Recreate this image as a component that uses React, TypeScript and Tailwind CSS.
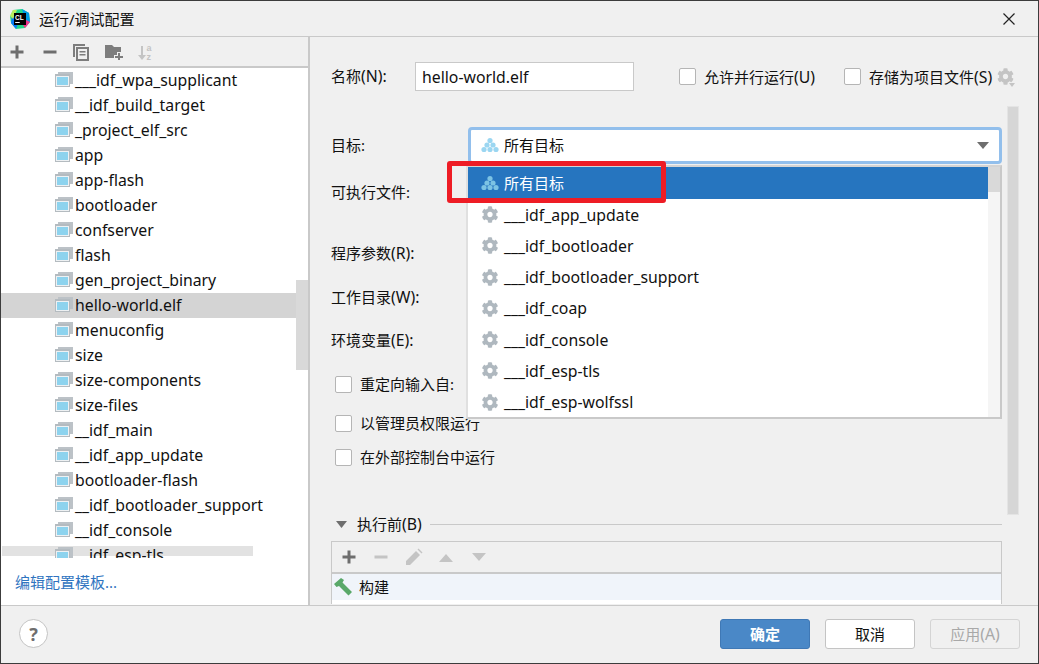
import React from "react";
import { FaCog } from "react-icons/fa";

const font = { fontFamily: '"Noto Sans", "Noto Sans CJK SC", sans-serif' };

function T({ s }: { s: string }) {
  return (
    <>
      {s.split(/([\x00-\x7f]+)/).map((p, i) =>
        /^[\x00-\x7f]+$/.test(p) ? (
          <span key={i} className="text-[15.8px]">{p}</span>
        ) : (
          <span key={i}>{p}</span>
        ),
      )}
    </>
  );
}

function ConfigIcon() {
  return (
    <svg width="18" height="17" viewBox="0 0 18 17" className="relative shrink-0">
      <path d="M3 3V1h15v12h-3V3z" fill="#bcc2c7" />
      <rect x="0.5" y="3.500" width="14" height="12" fill="#eef1f3" stroke="#b4bbc0" />
      <rect x="0" y="3" width="15" height="2" fill="#b4bbc0" />
      <rect x="2" y="6" width="11" height="8" fill="#8dd3ee" />
    </svg>
  );
}

function TargetIcon({ dim }: { dim?: boolean }) {
  const c = dim ? "#7cc3e4" : "#9bd6f1";
  return (
    <svg width="18" height="16" viewBox="0 0 18 16" className="shrink-0">
      {[[9, 3.5], [6, 8], [12, 8], [3, 12.5], [9, 12.5], [15, 12.5]].map(([x, y]) => (
        <circle key={`${x}-${y}`} cx={x} cy={y} r="2.6" fill={c} />
      ))}
    </svg>
  );
}

function Logo() {
  return (
    <svg width="20" height="20" viewBox="0 0 20 20">
      <path d="M3 1 12 0l7 4 1 9-5 6-9 1-5-6L0 7z" fill="#21d789" />
      <path d="M12 0l7 4 1 9-5-2z" fill="#009ae5" />
      <path d="M6 20l-5-6 1-6 7 4z" fill="#087cfa" />
      <path d="M15 19l5-6-4-2-3 5z" fill="#ed358c" />
      <path d="M3 1 0 7l3 3 4-9z" fill="#fcf84a" opacity="0.7" />
      <rect x="4" y="4" width="12" height="12" fill="#000" />
      <text x="5" y="10.5" fontSize="6.5" fontWeight="700" fill="#fff" fontFamily="Liberation Sans">CL</text>
      <rect x="5.200" y="13" width="4.500" height="1" fill="#fff" />
    </svg>
  );
}

function Plus() {
  return <path d="M6.500 0.500h3v5h5v3h-5v5h-3v-5h-5v-3h5z" fill="#6e6e6e" />;
}

function ToolIcons() {
  return (
    <div className="flex h-[31px] items-center border-b-2 border-[#c9c9c9]">
      <svg width="16" height="14" viewBox="0 0 16 14" className="ml-[8px]"><Plus /></svg>
      <svg width="16" height="14" viewBox="0 0 16 14" className="ml-[17px]"><rect x="1.500" y="5.500" width="13" height="3" fill="#6e6e6e" /></svg>
      <svg width="18" height="18" viewBox="0 0 18 18" className="ml-[14px]"><path d="M1 1h12v2H3v11H1z" fill="#7d7d7d" /><rect x="5" y="5" width="11" height="12" fill="#f0f0f0" stroke="#7d7d7d" strokeWidth="2" /><path d="M7.500 8h6v1.500h-6zM7.500 11h6v1.500h-6z" fill="#7d7d7d" /></svg>
      <svg width="18" height="16" viewBox="0 0 18 16" className="ml-[15px]"><path d="M0 1h7l2 2h7v5h-4v3H9v3H0z" fill="#7d7d7d" /><path d="M13 9h2v3h3v2h-3v2h-2v-2h-3v-2h3z" fill="#7d7d7d" /></svg>
      <svg width="18" height="18" viewBox="0 0 18 18" className="ml-[14px]"><path d="M4 3h2v9h3l-4 5-4-5h3z" fill="#c4c4c4" /><text x="9.500" y="8" fontSize="9" fontWeight="700" fill="#c4c4c4" fontFamily="Liberation Sans">a</text><text x="9.500" y="17" fontSize="9" fontWeight="700" fill="#c4c4c4" fontFamily="Liberation Sans">z</text></svg>
    </div>
  );
}

const tree = ["___idf_wpa_supplicant", "__idf_build_target", "_project_elf_src", "app", "app-flash", "bootloader", "confserver", "flash", "gen_project_binary", "hello-world.elf", "menuconfig", "size", "size-components", "size-files", "__idf_main", "__idf_app_update", "bootloader-flash", "__idf_bootloader_support", "__idf_console", "__idf_esp-tls"];

const targets = ["___idf_app_update", "___idf_bootloader", "___idf_bootloader_support", "___idf_coap", "___idf_console", "___idf_esp-tls", "___idf_esp-wolfssl"];

function Box() {
  return <span className="block h-[17px] w-[17px] shrink-0 rounded-[2px] border border-[#b5b5b5] bg-white" />;
}

function CheckRow({ label, h }: { label: string; h: string }) {
  return (
    <div className={`flex items-center gap-2 pl-1 ${h}`}>
      <Box />
      <span>{label}</span>
    </div>
  );
}

export default function App() {
  return (
    <div style={font} className="relative flex h-[664px] w-[1039px] flex-col overflow-hidden border border-[#3c3c3c] bg-[#f0f0f0] text-[15px] leading-[20px] text-[#111]">
      <div className="flex h-[36px] shrink-0 items-center border-b border-[#c9c9c9] pl-[9px] pr-[23px]">
        <Logo />
        <span className="ml-[9px]">运行/调试配置</span>
        <svg width="12" height="12" viewBox="0 0 12 12" className="ml-auto"><path d="M0.500 0.500l11 11M11.500 0.500l-11 11" stroke="#222" strokeWidth="1.200" fill="none" /></svg>
      </div>

      <div className="flex min-h-0 flex-1">
        <div className="flex w-[309px] shrink-0 flex-col border-r-2 border-[#c9c9c9] bg-white">
          <div className="bg-[#f0f0f0]"><ToolIcons /></div>
          <div className="relative h-[490px] shrink-0 overflow-hidden">
            {tree.map((t) => (
              <div key={t} className={`relative flex h-[25px] items-center gap-[2px] pb-[2px] pl-[54px] ${t === "hello-world.elf" ? "bg-[#d4d4d4]" : ""}`}>
                {t === "__idf_esp-tls" && <div className="absolute left-px top-[3px] h-[10px] w-[251px] bg-[#e2e2e2]" />}
                <ConfigIcon />
                <span className="relative whitespace-nowrap text-[15.8px]">{t}</span>
              </div>
            ))}
            <div className="absolute right-0 top-[212px] h-[90px] w-[12px] bg-[#d9d9d9]" />
          </div>
          <div className="flex flex-1 items-center pl-[14px] text-[#2f74c0]">编辑配置模板...</div>
        </div>

        <div className="relative min-w-0 flex-1">
          <div className="flex h-[53px] items-start pl-[21px] pt-[25px]">
            <span className="w-[84px] leading-[28px]"><T s="名称(N):" /></span>
            <div className="flex h-[29px] w-[219px] items-center border border-[#c9c9c9] bg-white pl-[6px] text-[15.8px]">hello-world.elf</div>
            <div className="ml-[45px] flex h-[29px] items-center gap-2"><Box /><span><T s="允许并行运行(U)" /></span></div>
            <div className="ml-[29px] flex h-[29px] items-center gap-2"><Box /><span><T s="存储为项目文件(S)" /></span></div>
            <div className="relative ml-[5px] mt-[6px]">
              <FaCog className="text-[17px] text-[#c4c4c4]" />
              <svg width="6" height="4" viewBox="0 0 6 4" className="absolute -right-[1px] top-[15px]"><path d="M0 0h6L3 4z" fill="#c4c4c4" /></svg>
            </div>
          </div>

          <div className="pl-[21px] pr-[36px] pt-[37px]">
            <div className="flex h-[36px] items-center">
              <span className="w-[137px] shrink-0">目标:</span>
              <div className="flex h-[37px] flex-1 items-center rounded-[4px] border-[3px] border-[#92bfec] bg-white pl-[10px] pr-[10px]">
                <TargetIcon />
                <span className="ml-[5px]">所有目标</span>
                <svg width="12" height="7" viewBox="0 0 12 7" className="ml-auto"><path d="M0 0h12L6 7z" fill="#6e6e6e" /></svg>
              </div>
            </div>
            <div className="flex h-[58px] items-center"><span>可执行文件:</span></div>
            <div className="flex h-[64px] items-center"><span><T s="程序参数(R):" /></span></div>
            <div className="flex h-[24px] items-center"><span><T s="工作目录(W):" /></span></div>
            <div className="flex h-[62px] items-center"><span><T s="环境变量(E):" /></span></div>
            <CheckRow label="重定向输入自:" h="h-[26px]" />
            <CheckRow label="以管理员权限运行" h="mt-[7px] h-[38px]" />
            <CheckRow label="在外部控制台中运行" h="h-[30px]" />

            <div className="mt-[40px] flex h-[24px] items-center">
              <svg width="12" height="7" viewBox="0 0 12 7" className="ml-[5px]"><path d="M0 0h11L5.500 7z" fill="#6e6e6e" /></svg>
              <span className="ml-[9px]"><T s="执行前(B)" /></span>
              <div className="ml-[8px] h-px flex-1 bg-[#c9c9c9]" />
            </div>
            <div className="mt-[5px] border border-b-0 border-[#c9c9c9]">
              <div className="flex h-[32px] items-center border-b-2 border-[#c9c9c9]">
                <svg width="16" height="14" viewBox="0 0 16 14" className="ml-[9px]"><Plus /></svg>
                <svg width="16" height="14" viewBox="0 0 16 14" className="ml-[16px]"><rect x="1.500" y="5.500" width="13" height="3" fill="#c4c4c4" /></svg>
                <svg width="18" height="18" viewBox="0 0 18 18" className="ml-[16px]"><path d="M1 13 11 3l4 4L5 17H1zM12.500 1.500l1-1 4 4-1 1z" fill="#c4c4c4" /></svg>
                <svg width="16" height="9" viewBox="0 0 16 9" className="ml-[15px]"><path d="M1 9 8 1l7 8z" fill="#c4c4c4" /></svg>
                <svg width="16" height="9" viewBox="0 0 16 9" className="ml-[17px]"><path d="M1 0h14L8 8z" fill="#c4c4c4" /></svg>
              </div>
              <div className="bg-white">
                <div className="flex h-[26px] items-center bg-[#f0f4fa]">
                  <svg width="20" height="20" viewBox="0 0 20 20" className="ml-[1px]"><path d="M1 7 8 1l3 2-1.500 2.500L19 15l-3.500 3.500L6 9 3.500 10z" fill="#59a869" /></svg>
                  <span className="ml-[6px]">构建</span>
                </div>
                <div className="h-[4px]" />
              </div>
            </div>
          </div>

          <div className="absolute right-[19px] top-[69px] h-[409px] w-[12px] border border-[#e4e4e4] bg-[#d6d6d6]" />

          <div className="absolute left-[156px] top-[128px] flex h-[254px] w-[536px] border-2 border-[#c9c9c9] border-l-[#e0e0e0] border-t-[#d4d4d4] bg-white">
            <div className="min-w-0 flex-1">
              <div className="flex h-[32px] items-center bg-[#2675bf] pl-[13px] text-white">
                <TargetIcon dim />
                <span className="ml-[5px]">所有目标</span>
              </div>
              {targets.map((t) => (
                <div key={t} className="flex h-[31.25px] items-center pl-[13px]">
                  <FaCog className="w-[18px] shrink-0 text-[17px] text-[#afb8bf]" />
                  <span className="ml-[5px] whitespace-nowrap text-[15.8px]">{t}</span>
                </div>
              ))}
            </div>
            <div className="w-[12px] shrink-0 bg-[#f5f5f5]">
              <div className="h-[25px] bg-[#d9d9d9]" />
            </div>
          </div>

          <div className="absolute left-[137px] top-[124px] h-[42px] w-[219px] rounded-[3px] border-[5px] border-[#ee1c25]" />
        </div>
      </div>

      <div className="flex h-[58px] shrink-0 items-center border-t border-[#c9c9c9] bg-[#f0f0f0] pb-[2px] pl-[18px] pr-[18px]">
        <div className="flex h-[29px] w-[29px] items-center justify-center rounded-full border border-[#c4c4c4] bg-white text-[18px] font-bold text-[#6e6e6e]">?</div>
        <button className="ml-auto h-[30px] w-[90px] rounded-[3px] border border-[#3f78b5] bg-[#4a88c7] font-bold text-white">确定</button>
        <button className="ml-[15px] h-[30px] w-[90px] rounded-[3px] border border-[#c4c4c4] bg-white">取消</button>
        <button className="ml-[15px] h-[30px] w-[90px] rounded-[3px] border border-[#d4d4d4] text-[#a8a8a8]"><T s="应用(A)" /></button>
      </div>
    </div>
  );
}
